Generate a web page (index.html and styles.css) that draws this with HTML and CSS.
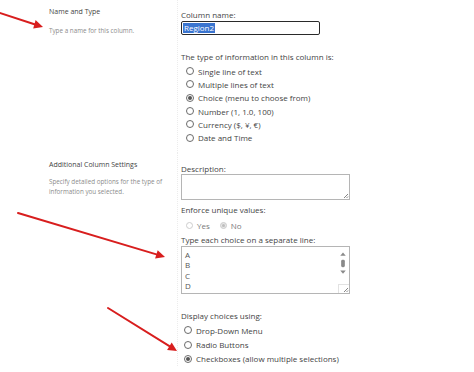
FILE: index.html
```html
<!DOCTYPE html>
<html>
<head>
<meta charset="utf-8">
<link rel="stylesheet" href="styles.css">
</head>
<body>
<div class="page">
  <section class="sec sec1">
    <div class="info">
      <div class="title">Name and Type</div>
      <div class="desc">Type a name for this column.</div>
    </div>
    <div class="fields">
      <div class="lbl">Column name:</div>
      <div class="input"><span class="sel">Region2</span></div>
      <div class="lbl gap17">The type of information in this column is:</div>
      <ul class="radios types">
        <li><span class="radio"></span>Single line of text</li>
        <li><span class="radio"></span>Multiple lines of text</li>
        <li><span class="radio on"></span>Choice (menu to choose from)</li>
        <li><span class="radio"></span>Number (1, 1.0, 100)</li>
        <li><span class="radio"></span>Currency ($, ¥, €)</li>
        <li><span class="radio"></span>Date and Time</li>
      </ul>
    </div>
  </section>
  <section class="sec sec2">
    <div class="info">
      <div class="title">Additional Column Settings</div>
      <div class="desc long">Specify detailed options for the type of information you selected.</div>
    </div>
    <div class="fields">
      <div class="lbl">Description:</div>
      <div class="area small">
        <div class="area-body"></div>
        <div class="grip-col"><svg class="grip" viewBox="0 0 8 8"><path d="M7 3 L3 7 M7 5.5 L5.5 7" stroke="#777" stroke-width="0.9"/></svg></div>
      </div>
      <div class="lbl gap5">Enforce unique values:</div>
      <div class="yesno">
        <span class="opt"><span class="radio dis"></span>Yes</span>
        <span class="opt"><span class="radio dis on"></span>No</span>
      </div>
      <div class="lbl gap4">Type each choice on a separate line:</div>
      <div class="area big">
        <div class="area-body lines">
          <div>A</div><div>B</div><div>C</div><div>D</div>
        </div>
        <div class="scroll">
          <svg class="sb" viewBox="0 0 10 40">
            <path d="M2 9.5 L5 6 L8 9.5 Z" fill="#8a8a8a"/>
            <rect x="3" y="14" width="4" height="8" rx="1.6" fill="#8a8a8a"/>
            <path d="M2 25.5 L8 25.5 L5 29 Z" fill="#8a8a8a"/>
          </svg>
          <div class="corner"><svg class="grip" viewBox="0 0 8 8"><path d="M7 3 L3 7 M7 5.5 L5.5 7" stroke="#777" stroke-width="0.9"/></svg></div>
        </div>
      </div>
      <div class="lbl gap17">Display choices using:</div>
      <ul class="radios display">
        <li><span class="radio"></span>Drop-Down Menu</li>
        <li><span class="radio"></span>Radio Buttons</li>
        <li><span class="radio on"></span>Checkboxes (allow multiple selections)</li>
      </ul>
    </div>
  </section>
  <svg class="arrows" viewBox="0 0 474 372" width="474" height="372">
    <g stroke="#d81e1e" stroke-width="2" stroke-linecap="round">
      <line x1="-2" y1="12.4" x2="34.4" y2="24.2"/>
      <line x1="18" y1="213" x2="156.4" y2="254.4"/>
      <line x1="108" y1="308" x2="169.4" y2="346.2"/>
    </g>
    <g fill="#d81e1e">
      <polygon points="43,27 33.2,28.4 35.6,20.0"/>
      <polygon points="165,257 155.1,258.6 157.7,250.2"/>
      <polygon points="177,351 167.1,350.0 171.7,342.4"/>
    </g>
  </svg>
</div>
</body>
</html>
```

FILE: styles.css
```css
* { box-sizing: border-box; }
html, body { margin: 0; padding: 0; background: #fff; }
body {
  font-family: "Open Sans", "Noto Sans", sans-serif;
  font-size: 8px;
  color: #444;
}
.page {
  position: relative;
  width: 474px;
  height: 372px;
  overflow: hidden;
  padding-left: 49px;
}
.sec {
  display: grid;
  grid-template-columns: 128px 200px;
}
.sec1 { height: 153px; }
.info { padding-top: 7px; }
.title {
  font-size: 7px;
  line-height: 10px;
  color: #3f3f3f;
  white-space: nowrap;
}
.desc {
  margin-top: 8.5px;
  font-size: 6.3px;
  line-height: 9px;
  color: #8c8c8c;
  white-space: nowrap;
}
.desc.long {
  white-space: normal;
  width: 114px;
  margin-top: 7px;
  line-height: 10px;
}
.fields {
  border-left: 1px dotted #ececec;
  padding-left: 3px;
  padding-top: 10px;
}
.sec2 .fields { padding-top: 11px; }
.lbl {
  line-height: 10px;
  color: #444;
  white-space: nowrap;
}
.gap17 { margin-top: 17px; }
.gap5 { margin-top: 5px; }
.gap4 { margin-top: 4px; }
.input {
  margin-top: 1px;
  width: 139px;
  height: 14px;
  border: 1px solid #2a2a2a;
  border-radius: 2px;
  padding: 1px 1px;
  display: flex;
}
.sel {
  background: #3a74cf;
  color: #fff;
  font-size: 8px;
  line-height: 10px;
  padding: 0 1px;
}
.radios {
  list-style: none;
  margin: 2.5px 0 0;
  padding: 0 0 0 5px;
}
.radios li {
  height: 13.33px;
  display: flex;
  align-items: center;
  gap: 4px;
  white-space: nowrap;
}
.radios.display { margin-top: 2px; padding-left: 3px; }
.radios.display li { height: 14.4px; }
.radio {
  width: 8px;
  height: 8px;
  border: 1px solid #6b6b6b;
  border-radius: 50%;
  background: #fff;
  display: inline-flex;
  align-items: center;
  justify-content: center;
  flex: none;
}
.radio.on::after {
  content: "";
  width: 4px;
  height: 4px;
  border-radius: 50%;
  background: #555;
}
.radio.dis {
  width: 7px;
  height: 7px;
  border-color: #cdcdcd;
}
.radio.dis.on { background: #e6e6e6; }
.radio.dis.on::after { background: #bdbdbd; width: 3px; height: 3px; }
.area {
  display: flex;
  width: 169px;
  border: 1px solid #b5b5b5;
  background: #fff;
}
.area.small { height: 26px; }
.area.big { height: 48px; margin-top: 1px; }
.area-body { flex: 1; }
.grip-col {
  width: 10px;
  display: flex;
  flex-direction: column;
  justify-content: flex-end;
  align-items: flex-end;
}
.grip { width: 8px; height: 8px; display: block; }
.yesno {
  margin-top: 4px;
  height: 12px;
  display: flex;
  align-items: center;
  padding-left: 5px;
  gap: 10px;
  color: #7a7a7a;
}
.opt { display: flex; align-items: center; gap: 4px; }
.lines {
  padding: 3px 0 0 3px;
  line-height: 10.3px;
  color: #555;
}
.scroll {
  width: 11px;
  display: flex;
  flex-direction: column;
  justify-content: space-between;
}
.sb { width: 10px; height: 40px; display: block; }
.corner {
  width: 11px;
  height: 10px;
  border-left: 1px solid #e2e2e2;
  border-top: 1px solid #e2e2e2;
  display: flex;
  align-items: flex-end;
  justify-content: flex-end;
}
.arrows {
  position: absolute;
  left: 0;
  top: 0;
  pointer-events: none;
}
```
